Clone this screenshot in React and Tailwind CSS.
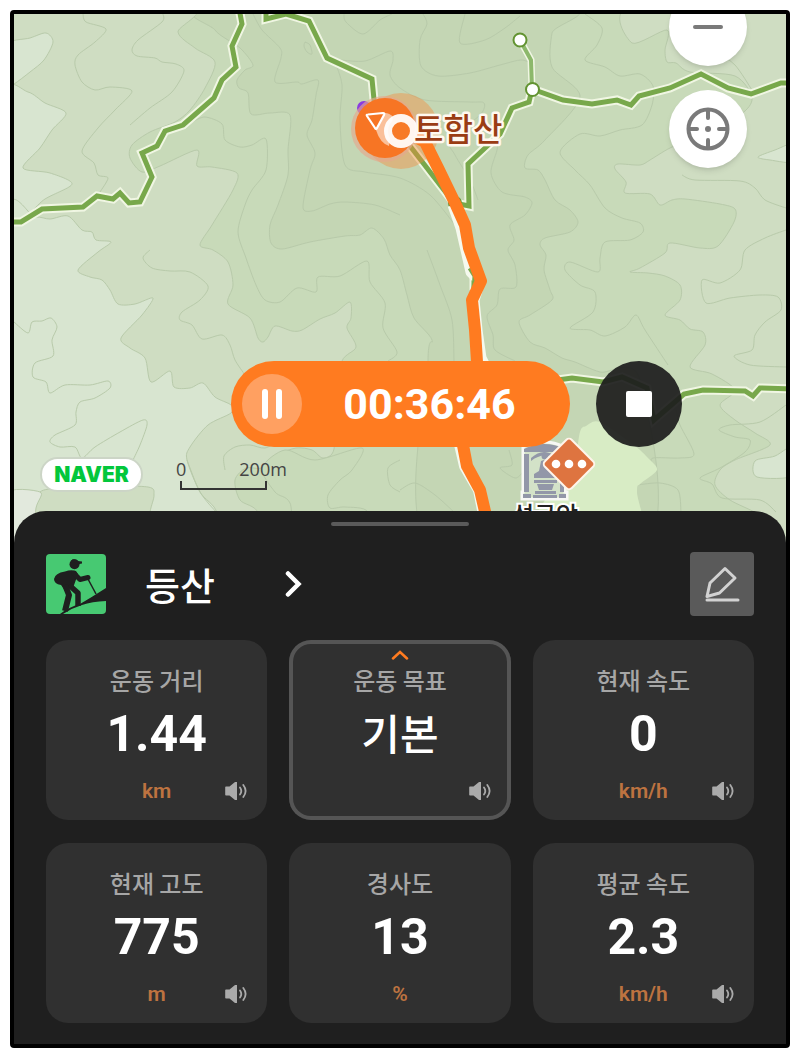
// Points are "x,y x,y ..." pairs; the curve passes through every one of them.
function smooth(points, closed = false) {
  const p = points.trim().split(/\s+/).map((pair) => pair.split(',').map(Number))
  const n = p.length
  const at = (i) => (closed ? p[(i + n) % n] : p[Math.max(0, Math.min(n - 1, i))])
  let d = `M${p[0][0]} ${p[0][1]}`
  for (let i = 0; i < (closed ? n : n - 1); i++) {
    const [a, b, c, e] = [at(i - 1), at(i), at(i + 1), at(i + 2)]
    d += `C${b[0] + (c[0] - a[0]) / 7} ${b[1] + (c[1] - a[1]) / 7} ${c[0] - (e[0] - b[0]) / 7} ${c[1] - (e[1] - b[1]) / 7} ${c[0]} ${c[1]}`
  }
  return closed ? d + 'Z' : d
}

const terrain = [
  {
    fill: '#c4d6b4',
    points:
      '213,6 215,30 240,48 253,65 245,70 237,80 239,88 248,93 251,114 270,113 290,115 288,150 288,175 278,205 270,225 271,243 282,249 310,242 345,236 360,235 372,228 384,239 390,255 400,270 407,295 414,318 432,340 428,361 430,545 645,545 640,380 600,372 575,362 562,358 545,348 530,342 519,322 530,315 552,300 550,290 544,270 546,255 540,245 545,238 570,232 578,222 570,210 555,200 545,180 538,170 525,168 528,155 545,140 580,97 552,67 552,33 561,6',
  },
  {
    fill: '#cfddc2',
    points:
      '0,6 189,6 178,32 195,48 215,62 205,88 190,110 175,122 150,132 132,145 130,158 142,172 160,166 197,150 197,166 212,167 237,173 233,190 212,225 200,245 213,250 228,262 233,285 228,304 250,318 258,338 263,342 268,337 275,326 292,331 302,330 320,319 335,313 350,302 351,318 347,328 356,347 342,361 335,400 334,449 323,458 312,450 296,448 278,455 262,468 246,468 235,480 240,500 258,513 258,556 0,556',
  },
  {
    fill: '#cfddc2',
    points:
      '796,6 631,6 632,43 667,30 665,50 667,62 676,63 690,72 735,76 752,98 740,115 700,135 670,148 650,160 640,165 618,164 615,169 626,182 625,193 650,194 660,205 672,200 685,199 720,204 735,209 734,222 718,246 700,248 670,243 665,253 640,268 630,272 648,273 665,276 680,285 680,300 665,315 680,320 690,329 703,332 705,345 690,367 712,374 735,390 720,405 735,420 755,433 770,445 735,460 720,470 715,485 730,500 760,515 796,540',
  },
  { fill: '#d8e5d0', points: '4,46 30,38 46,33 53,42 44,60 30,72 14,84 4,88' },
  { fill: '#d8e5d0', points: '4,93 28,92 45,103 66,113 52,130 40,148 23,168 50,173 72,184 45,199 4,225' },
  {
    fill: '#d8e5d0',
    points:
      '4,222 35,217 50,219 68,216 82,230 92,232 96,240 111,242 98,252 78,270 90,277 102,280 110,290 118,304 135,304 153,298 142,315 121,338 130,348 145,358 151,382 170,371 174,387 190,388 203,383 215,397 231,405 231,413 208,425 190,447 187,460 200,492 217,513 217,556 4,556',
  },
  { fill: '#cfddc2', points: '148,487 154,495 150,512 145,545 25,545 34,510 40,492 60,488 100,486' },
  { fill: '#e2e9dd', points: '4,494 40,492 36,508 30,545 4,545' },
  { fill: '#c8dab9', points: '262,468 285,450 315,460 362,448 352,470 340,480 328,495 330,508 345,507 368,512 368,545 300,545 290,503 275,492' },
  { fill: '#d8e5d0', points: '758,157 775,150 796,143 796,162 770,160' },
  { fill: '#d8e5d0', points: '755,461 775,456 796,445 796,475 757,477' },
]

const contours = [
  '83,14 86,22 106,29 95,42 78,55 75,65 82,82 95,90 110,87 132,91 115,110 98,128 82,151 94,163 98,175 108,178 100,192',
  '163,14 162,22 138,40 132,50 137,56 155,58 162,62 176,64 184,71 172,92 150,108 130,125',
  '253,14 262,30 280,48 281,58 275,82 297,82 302,84 318,80 316,95 312,120 307,135 315,153 310,170 303,207 312,211 330,204 345,202 375,205 400,215',
  '192,122 205,117 222,124 225,140 240,147 252,145 266,139 266,170 252,190 245,205 238,232 246,258 256,285 265,300 280,302 297,288 316,292 318,277 340,276 367,261 370,282 385,303 383,328 397,352 388,361',
  '305,42 310,45 312,54 307,52 304,46 305,42',
  '344,14 346,22 363,34 380,20 392,14',
  '340,60 365,61 390,51 393,60 390,75 400,88 425,100 470,102 484,103 480,115 450,140 455,155 470,180 478,200',
  '335,62 342,85 340,120 345,165 365,172 400,178 430,195 455,225',
  '423,14 427,24 420,40 421,66 438,76 470,73 500,65 522,60 535,66',
  '465,14 460,43 485,40 505,28 520,16',
  '585,14 602,28 597,45 585,60 605,67 620,76 640,74 653,86 652,105 642,125 620,130 600,136 580,134 560,152 575,170 590,185 605,208 622,218 640,223 643,232 630,240 605,242 600,258 598,272 570,262 565,270 580,285 595,292 593,312 570,328 590,330 605,336 625,327 636,315 645,330 668,365',
  '500,130 497,150 491,173 502,192 525,197 532,203 525,215 510,225 514,240 508,250 515,265 516,287 500,289 497,305 487,316 493,335 495,350 515,361',
  '682,175 695,180 740,181 755,188 765,200 786,208',
  '706,14 701,30 715,50 735,65 752,90',
  '786,230 765,238 745,250 740,270 720,283 702,280 706,303 730,298 760,295 778,297 781,310 765,322 755,335 752,350 734,356 750,365 786,367',
  '14,322 28,333 32,322 42,321 51,318 57,327 52,340 53,356 35,363 33,377 46,382 50,393 65,385 90,385 108,381 110,388 95,398 80,402 76,412 75,425 55,435 50,442 60,447 75,447 82,458 95,447 120,432 143,420 147,425 140,445 133,460',
  '150,250 143,258 152,268 170,271 190,272 208,286 200,300 182,312 180,320 192,325 202,339 222,335 230,345 235,360 245,375',
  '187,460 200,492 217,513',
  '225,470 224,456 235,447 250,445 265,448 280,440',
  '400,460 388,468 390,485 400,492',
  '400,490 415,483 435,495 455,513',
  '427,250 440,285 452,320 454,361',
  '509,450 512,465 500,468 515,478 523,472',
  '637,485 660,483 678,490 681,512',
  '652,465 653,458 680,458 694,454 680,425 676,410',
  '786,405 760,422 730,425 719,430 735,437 750,440 745,452 720,468 700,478 712,484 722,498 760,500 776,512',
]

const trails = [
  '8,222 21,222 42,209 83,207 97,196 113,199 120,193 129,203 140,202 152,177 142,153 157,146 165,131 183,125 214,98 222,80 236,67 232,46 242,24 239,8',
  '266,4 266,19 286,14 309,21 327,58 372,79 375,110',
  '532,89 529,102 512,108 500,134 468,164 469,206 454,203 410,146',
  '532,89 563,100 592,104 617,100 631,105 639,96 670,88 701,74 728,88 751,94 781,83 796,83',
  '550,381 572,378 603,382 622,377 647,388 654,420 684,394 703,390 745,391 753,396 760,388 796,389',
  '454,203 461,228 466,250 474,275 474,290',
]

function TrailMap() {
  return (
    <svg
      viewBox="14 14 772 529"
      preserveAspectRatio="xMidYMin slice"
      className="absolute inset-0 h-full w-full"
      role="img"
      aria-label="토함산 지도"
    >
      <g stroke="#b8caaa" strokeWidth="1">
        {terrain.map((area) => (
          <path key={area.points} d={smooth(area.points, true)} fill={area.fill} />
        ))}
      </g>
      <g stroke="#b8caaa" strokeWidth="1" fill="none" strokeLinejoin="round">
        {contours.map((line) => (
          <path key={line} d={smooth(line)} />
        ))}
      </g>
      <path
        d={smooth('580,432 586,426 600,422 635,446 648,458 657,470 640,484 637,492 638,545 530,545 545,500 572,470', true)}
        fill="#d8ecc5"
      />

      {/* trails */}
      <g fill="none" stroke="#f0f6e3" strokeWidth="9">
        {trails.map((line) => (
          <polyline key={line} points={line} />
        ))}
        <polyline points="520,40 531,60 532,89" strokeWidth="7" />
      </g>
      <g fill="none" stroke="#78a84b" strokeWidth="5">
        {trails.map((line) => (
          <polyline key={line} points={line} />
        ))}
        <polyline points="520,40 531,60 532,89" stroke="#8cb86b" strokeWidth="4" />
      </g>
      <g fill="#fff" stroke="#629331" strokeWidth="2">
        <circle cx="520" cy="40" r="6.5" />
        <circle cx="532.5" cy="89.5" r="6.5" />
        <circle cx="455" cy="203" r="6" fill="#b7d39a" />
      </g>

      {/* Seokguram */}
      <path d="M523 447q21-10 42 0v45h2v7h-45v-7h1z" fill="#d3e2c8" stroke="#f7f8f5" strokeWidth="3" />
      <g fill="#9297a8">
        <path d="M524 449q20-10 41 0v3h-41z" />
        <path d="M524 454h5v38h-5zM560 454h4v38h-4zM523 494h8v4h-8zM559 494h7v4h-7z" />
        <path d="M531 458q13-12 27 0v3q-13-11-27 0z" />
        <circle cx="545" cy="456" r="3.5" />
        <path d="M541 461q4-2 8 0l3 11 6 2v4h-24v-4l5-3z" />
        <path d="M534 480h23v3h-23zM537 484h17l-2 6h-13zM535 491h21v3h-21zM533 495h24v3h-24z" />
      </g>
      <text
        x="545"
        y="524"
        textAnchor="middle"
        fill="#222"
        stroke="#fff"
        strokeWidth="4"
        paintOrder="stroke"
        className="font-['Noto_Sans_CJK_KR',sans-serif] text-[24px] font-medium"
      >
        석굴암
      </text>
      <g transform="translate(569 464)">
        <rect x="-19" y="-19" width="38" height="38" rx="4" transform="rotate(45)" fill="#de7440" stroke="#fff4ea" strokeWidth="2" />
        <g fill="#fff">
          <circle cx="-13" r="4.3" />
          <circle r="4.3" />
          <circle cx="13" r="4.3" />
        </g>
      </g>

      {/* recorded track */}
      <circle cx="364" cy="108" r="7" fill="#8a3be0" />
      <circle cx="401" cy="131" r="38" fill="#f58a3c" fillOpacity="0.42" />
      <g fill="none" strokeLinejoin="round">
        <polyline points="453,205 461,228 466,250 471,272 480,281 474,300 477,330 481,358 484,364" stroke="#f5f9ee" strokeWidth="11" />
        <polyline points="470,268 475,276 474,290" stroke="#78a84b" strokeWidth="5" />
        <polyline points="459,440 465,466 479,490 485,520" stroke="#f5f9ee" strokeWidth="12" />
        <polyline
          points="410,134 425,142 438,168 456,205 465,225 469,248 481,281 472,300 475,330 477,362 462,440 467,466 480,490 487,520"
          stroke="#ff7b20"
          strokeWidth="12"
        />
      </g>
      <circle cx="384" cy="129" r="33" fill="#e5a78e" fillOpacity="0.65" />
      <circle cx="385" cy="128" r="30" fill="#f77524" />
      <path d="M378 115q9-5 15 2l-4 29q-9-3-13-16z" fill="#fbd9c2" fillOpacity="0.75" />
      <path d="M368 114.5 383 113q2 0 1 2l-7 13q-1 2-2 0l-8-12q-1-1.5 1-1.5z" fill="#f77524" stroke="#fff" strokeWidth="2.2" />
      <circle cx="401" cy="131" r="13" fill="#f77a26" stroke="#fff" strokeWidth="8" strokeOpacity="0.93" />
      <text
        x="414"
        y="141"
        fill="#9a3c14"
        stroke="#fff8ef"
        strokeWidth="5"
        strokeLinejoin="round"
        paintOrder="stroke"
        className="font-['Noto_Sans_CJK_KR',sans-serif] text-[32px] font-medium"
      >
        토함산
      </text>
    </svg>
  )
}

function HikerIcon() {
  return (
    <svg viewBox="0 0 60 60" className="size-[60px] shrink-0 rounded-[4px] bg-[#47c972]" aria-hidden="true">
      <g fill="#1f1f1f">
        <circle cx="28.5" cy="10.3" r="5" />
        <path d="M25 6.5q3-2.5 7 .5l4 .5v2l-5 1z" />
        <path d="M19 17.5q6-2 11-.5L32 20 27 34l-9 1-3-4q-7-1-7-6 1-6 11-7.500z" />
        <path d="M14 60q9-7 20-10Q46 43 60 34v13q-14 .5-24 4Q26 54 17 60z" />
      </g>
      <g fill="none" stroke="#1f1f1f" strokeLinejoin="round">
        <path d="M28 19.500 34 25.500 42 23.500" strokeWidth="5" strokeLinecap="round" />
        <path d="M23 31 32 39V52" strokeWidth="5.5" />
        <path d="M19 31 23 41 19 57" strokeWidth="6" />
        <path d="M42 25 50 40" strokeWidth="1.5" />
      </g>
    </svg>
  )
}

function SpeakerIcon() {
  return (
    <svg viewBox="0 0 22 20" className="h-5 w-[22px]" fill="none" stroke="#aaa" strokeWidth="1.8" strokeLinecap="round" aria-hidden="true">
      <path d="M1 5.500h3.500L10 1h2v18h-2l-5.500-4.500H1q-.8 0-.8-.8V6.300Q.2 5.500 1 5.500z" fill="#aaa" stroke="none" />
      <path d="M15 6.500q2.600 3.500 0 7M18.300 4q4.600 6 0 12" />
    </svg>
  )
}

const stats = [
  { label: '운동 거리', value: '1.44', unit: 'km', sound: true },
  { label: '운동 목표', value: '기본', unit: '', sound: true, goal: true },
  { label: '현재 속도', value: '0', unit: 'km/h', sound: true },
  { label: '현재 고도', value: '775', unit: 'm', sound: true },
  { label: '경사도', value: '13', unit: '%', sound: false },
  { label: '평균 속도', value: '2.3', unit: 'km/h', sound: true },
]

function StatCard({ label, value, unit, sound, goal }) {
  return (
    <div
      className={
        goal
          ? 'relative h-[180px] rounded-[22px] bg-[#303030] pt-6 text-center inset-ring-4 inset-ring-[#555]'
          : 'relative h-[180px] rounded-[22px] bg-[#303030] pt-6 text-center'
      }
    >
      {goal && (
        <svg viewBox="0 0 18 10" className="absolute inset-x-0 top-[10px] mx-auto h-[10px] w-[18px]" fill="none" stroke="#ff7b20" strokeWidth="2.5" strokeLinecap="round" aria-hidden="true">
          <path d="M2 8.500 9 2l7 6.500" />
        </svg>
      )}
      <h2 className="text-[24px] leading-8 font-medium text-[#a6a6a6]">{label}</h2>
      <p
        className={
          goal
            ? 'mt-3 text-[42px] leading-[48px] font-medium text-white'
            : "mt-[14px] font-['Roboto',sans-serif] text-[50px] leading-[48px] font-bold text-white"
        }
      >
        {value}
      </p>
      <div className="absolute inset-x-0 bottom-[14px] grid h-[30px] grid-cols-[1fr_auto_1fr] items-center px-5">
        <span className="col-start-2 font-['Roboto',sans-serif] text-[21px] leading-[30px] font-semibold text-[#bd7340]">{unit}</span>
        {sound && (
          <button type="button" className="col-start-3 justify-self-end" aria-label={`${label} 음성 안내`}>
            <SpeakerIcon />
          </button>
        )}
      </div>
    </div>
  )
}

export default function App() {
  return (
    <div className="bg-white p-[10px] font-['Noto_Sans_CJK_KR',sans-serif]">
      <main className="overflow-hidden rounded-[4px] border-4 border-black bg-[#1f1f1f]">
        <section className="relative h-[529px] overflow-hidden bg-[#c8dab9]">
          <TrailMap />

          <div className="absolute -top-[26px] right-[39px] flex flex-col gap-6">
            <button type="button" aria-label="축소" className="flex size-[78px] items-center justify-center rounded-full bg-white shadow-md">
              <span className="h-1 w-[30px] rounded-full bg-[#7a7a7a]" />
            </button>
            <button type="button" aria-label="현재 위치" className="flex size-[78px] items-center justify-center rounded-full bg-white shadow-md">
              <svg viewBox="0 0 44 44" className="size-11" fill="none" stroke="#7a7a7a" strokeWidth="4" strokeLinecap="round">
                <circle cx="22" cy="22" r="19.5" />
                <path d="M22 4v7M22 33v7M4 22h7M33 22h7" />
                <circle cx="22" cy="22" r="3" fill="#7a7a7a" stroke="none" />
              </svg>
            </button>
          </div>

          <div className="absolute inset-x-0 top-[347px] grid grid-cols-[1fr_auto_1fr] items-center">
            <div className="col-start-2 flex h-[86px] w-[339px] items-center rounded-full bg-[#ff7b20] pr-3 pl-[11px]">
              <button type="button" aria-label="일시정지" className="flex size-[60px] items-center justify-center gap-2 rounded-full bg-[#ffa061]">
                <span className="h-[30px] w-[6px] rounded-full bg-white" />
                <span className="h-[30px] w-[6px] rounded-full bg-white" />
              </button>
              <time className="flex-1 text-center font-['Roboto',sans-serif] text-[43px] leading-none font-bold text-white">00:36:46</time>
            </div>
            <button type="button" aria-label="정지" className="ml-[26px] flex size-[86px] items-center justify-center rounded-full bg-[#1c1c1c]/92">
              <span className="size-[26px] rounded-[2px] bg-white" />
            </button>
          </div>

          <div className="absolute top-[443px] left-[26px] flex items-start gap-[33px]">
            <a
              href="#naver"
              className="flex h-[35px] w-[103px] items-center justify-center rounded-full border-2 border-[#ccd5c6] bg-white font-['Inter',sans-serif] text-[21px] leading-none font-black text-[#03c73c]"
            >
              NAVER
            </a>
            <div className="font-['Open_Sans',sans-serif] text-[18px] leading-6 text-[#444]">
              <div className="flex justify-between gap-[53px]">
                <span>0</span>
                <span>200m</span>
              </div>
              <div className="ml-1 h-[9px] w-[87px] border-x-2 border-b-2 border-[#333]" />
            </div>
          </div>
        </section>

        <section className="relative -mt-8 rounded-t-[32px] bg-[#1f1f1f] px-8 pt-[11px] pb-[21px]">
          <div className="mx-auto h-1 w-[138px] rounded-full bg-[#5a5a5a]" />

          <header className="mt-[26px] mb-6 flex h-16 items-center justify-between">
            <button type="button" className="flex items-center">
              <HikerIcon />
              <span className="ml-[39px] text-[38px] leading-[48px] font-medium text-white">등산</span>
              <svg viewBox="0 0 18 28" className="ml-[70px] h-7 w-[18px]" fill="none" stroke="#fff" strokeWidth="4.5" strokeLinecap="round" aria-hidden="true">
                <path d="M3 3.500 13.500 14 3 24.500" />
              </svg>
            </button>
            <button type="button" aria-label="편집" className="flex size-16 items-center justify-center rounded-[4px] bg-[#5a5a5a]">
              <svg viewBox="0 0 36 36" className="size-9" fill="none" stroke="#d2d2d2" strokeWidth="3" strokeLinecap="round" strokeLinejoin="round">
                <path d="M21 2.500 31 12 15.500 27 3 30.500 6 17z" />
                <path d="M3 34h31" />
              </svg>
            </button>
          </header>

          <div className="grid grid-cols-3 gap-x-[22px] gap-y-[23px]">
            {stats.map((stat) => (
              <StatCard key={stat.label} {...stat} />
            ))}
          </div>
        </section>
      </main>
    </div>
  )
}
